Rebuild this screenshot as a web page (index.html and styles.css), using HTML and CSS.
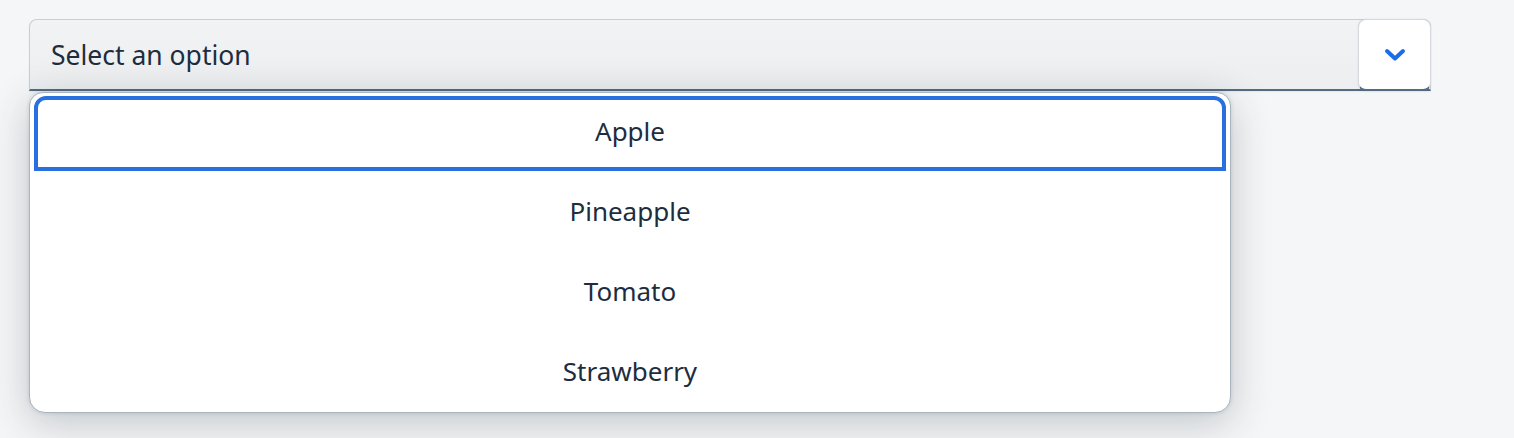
FILE: index.html
```html
<!DOCTYPE html>
<html lang="en">
<head>
<meta charset="utf-8">
<title>Select</title>
<link rel="stylesheet" href="styles.css">
</head>
<body>
<div class="page">
  <div class="select">
    <div class="field">
      <span class="placeholder">Select an option</span>
      <button class="toggle" type="button" aria-label="Open">
        <svg width="22" height="14" viewBox="0 0 22 14"><path d="M3 3 L11 10.5 L19 3" fill="none" stroke="#1b6ee6" stroke-width="4" stroke-linecap="round" stroke-linejoin="round"/></svg>
      </button>
    </div>
    <ul class="list">
      <li class="item focused">Apple</li>
      <li class="item">Pineapple</li>
      <li class="item">Tomato</li>
      <li class="item">Strawberry</li>
    </ul>
  </div>
</div>
</body>
</html>
```
FILE: styles.css
```css
html, body {
  margin: 0;
  padding: 0;
  background: #f5f6f7;
  font-family: "Noto Sans", "Liberation Sans", sans-serif;
  color: #1d2d3e;
}
.page {
  padding: 19px 0 0 29px;
  height: 438px;
  box-sizing: border-box;
}
.select {
  width: 1402px;
  position: relative;
}
.field {
  height: 72px;
  box-sizing: border-box;
  border: 1px solid #c9ced3;
  border-bottom: 2px solid #556b82;
  border-radius: 8px 8px 0 0;
  background: linear-gradient(#f2f3f4, #eceef0);
  display: flex;
  align-items: center;
  padding-left: 21px;
  box-shadow: 0 1px 2px rgba(0,0,0,0.06);
}
.placeholder {
  flex: 1;
  font-size: 26.5px;
}
.toggle {
  width: 73px;
  height: 72px;
  margin: -1px -1px -2px 0;
  box-sizing: border-box;
  border: 1px solid #d5d9dd;
  border-bottom: 2px solid #556b82;
  border-radius: 8px;
  background: #fff;
  display: flex;
  align-items: center;
  justify-content: center;
  padding: 0;
  box-shadow: 0 0 2px rgba(0,0,0,0.1);
}
.list {
  position: absolute;
  top: 73px;
  left: 0;
  width: 1202px;
  box-sizing: border-box;
  margin: 0;
  padding: 0 0 1px;
  list-style: none;
  background: #fff;
  border: 1px solid #a9b4be;
  border-radius: 14px 14px 16px 16px;
  box-shadow: 0 10px 40px rgba(29,45,62,0.24), 0 0 4px rgba(29,45,62,0.14);
}
.item {
  height: 80px;
  display: flex;
  align-items: center;
  justify-content: center;
  font-size: 26px;
  box-sizing: border-box;
}
.item.focused {
  height: 75px;
  margin: 3px 4px 0;
  padding-bottom: 5px;
  border: 4px solid #2a6fe0;
  border-radius: 12px 12px 0 0;
}
```
